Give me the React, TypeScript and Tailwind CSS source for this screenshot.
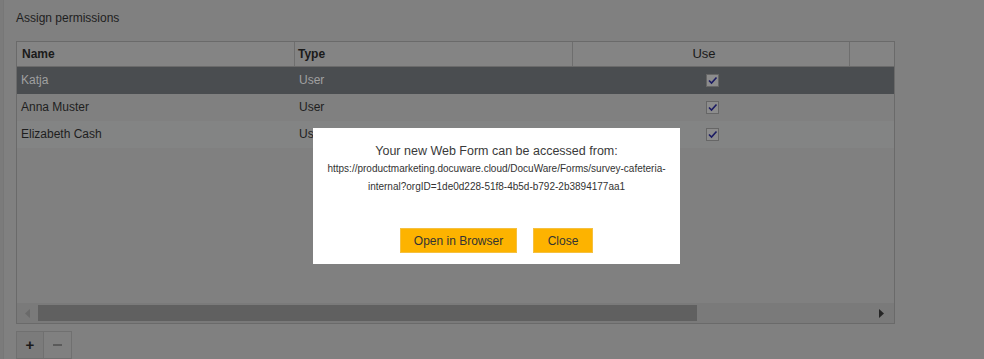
import React from "react";

const font = { fontFamily: '"Liberation Sans", Arial, sans-serif' };

function Check() {
  return (
    <div className="w-[13px] h-[13px] border border-[#666] bg-[#8c8c8c] flex items-center justify-center">
      <svg width="11" height="11" viewBox="0 0 11 11">
        <path d="M2 5.5 L4.5 8 L9.5 2.5" stroke="#1b1b63" strokeWidth="1.6" fill="none" />
      </svg>
    </div>
  );
}

const rows = [
  { name: "Katja", type: "User", sel: true, bg: "bg-[#4a4d50]" },
  { name: "Anna Muster", type: "User", sel: false, bg: "bg-[#808080]" },
  { name: "Elizabeth Cash", type: "User", sel: false, bg: "bg-[#838484]" },
];

export default function App() {
  return (
    <div className="relative w-[984px] h-[359px] bg-[#808080] overflow-hidden flex" style={font}>
      <div className="w-[4px] h-full bg-[#7b7b7b] border-r border-[#777]" />
      <div className="flex flex-col pl-[12px]">
        <div className="h-[41px] pt-[10px] text-[12px] text-[#1e1e1e] leading-[16px]">Assign permissions</div>
        <div className="w-[879px] h-[286px] border border-[#6a6a6a] flex flex-col">
          <div className="h-[25px] flex bg-[#848484] border-b border-[#6a6a6a] text-[12px] text-[#1a1a1a]">
            <div className="w-[278px] border-r border-[#6e6e6e] pl-[5px] flex items-center font-bold">Name</div>
            <div className="w-[278px] border-r border-[#6e6e6e] pl-[3px] flex items-center font-bold">Type</div>
            <div className="w-[277px] border-r border-[#6e6e6e] flex items-center justify-center pr-[14px] text-[13px]">Use</div>
            <div className="flex-1" />
          </div>
          {rows.map((r) => (
            <div key={r.name} className={`h-[27px] flex items-center text-[12px] ${r.bg} ${r.sel ? "text-[#a0a0a0]" : "text-[#1e1e1e]"}`}>
              <div className="w-[279px] pl-[4px]">{r.name}</div>
              <div className="w-[278px] pl-[3px]">{r.type}</div>
              <div className="w-[277px] flex justify-center">
                <Check />
              </div>
            </div>
          ))}
          <div className="flex-1" />
          <div className="h-[20px] bg-[#7a7a7a] flex items-center">
            <div className="w-[21px] flex justify-center">
              <svg width="6" height="9" viewBox="0 0 6 9"><path d="M5 0 L0 4.5 L5 9 Z" fill="#6a6a6a" /></svg>
            </div>
            <div className="w-[659px] h-[16px] bg-[#606060]" />
            <div className="flex-1" />
            <div className="w-[21px] flex justify-center pr-[4px]">
              <svg width="6" height="9" viewBox="0 0 6 9"><path d="M0 0 L5 4.5 L0 9 Z" fill="#262626" /></svg>
            </div>
          </div>
        </div>
        <div className="mt-[7px] flex">
          <div className="w-[28px] h-[28px] border border-[#707070] bg-[#7b7b7b] flex items-center justify-center text-[#1a1a1a] text-[15px] font-bold">+</div>
          <div className="w-[28px] h-[28px] border border-l-0 border-[#707070] flex items-center justify-center">
            <div className="w-[9px] h-[2px] bg-[#5a5a5a]" />
          </div>
        </div>
      </div>

      <div className="absolute left-[313px] top-[128px] w-[367px] h-[136px] bg-white flex flex-col items-center">
        <div className="mt-[14px] text-[12.5px] leading-[18px] text-[#3a3a3a]">Your new Web Form can be accessed from:</div>
        <div className="mt-[0px] text-[10px] leading-[18px] text-[#333] text-center whitespace-nowrap">
          https://productmarketing.docuware.cloud/DocuWare/Forms/survey-cafeteria-
          <br />
          internal?orgID=1de0d228-51f8-4b5d-b792-2b3894177aa1
        </div>
        <div className="mt-[32px] flex gap-[16px]">
          <div className="w-[117px] h-[25px] bg-[#fdb300] border border-[#f5c040] flex items-center justify-center text-[12px] text-[#333]">Open in Browser</div>
          <div className="w-[60px] h-[25px] bg-[#fdb300] border border-[#f5c040] flex items-center justify-center text-[12px] text-[#333]">Close</div>
        </div>
      </div>
    </div>
  );
}
